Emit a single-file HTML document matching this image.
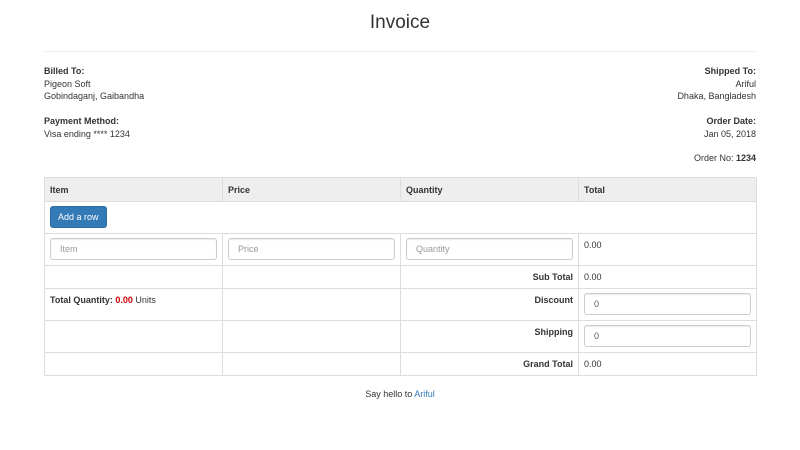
<!DOCTYPE html>
<html><head><style>
body{margin:0;background:#fff;font-family:"Liberation Sans",sans-serif;font-size:9px;color:#333;width:800px;height:450px;position:relative}
.a{position:absolute;line-height:12.5px}
h1{position:absolute;top:11px;left:0;width:800px;text-align:center;margin:0;font-weight:400;font-size:19px;line-height:24px}
hr{position:absolute;top:51px;left:44px;width:712px;margin:0;border:0;border-top:1px solid #eee}
table{position:absolute;left:44px;top:177px;width:713px;border-collapse:collapse;table-layout:fixed}
td,th{border:1px solid #ddd;padding:5px;vertical-align:top;text-align:left;line-height:12px}
th{background:#eee;font-weight:bold;padding-top:6px}
.r{text-align:right;font-weight:bold}
.in{border:1px solid #ccc;border-radius:3px;box-sizing:border-box;height:22px;padding:5px 9px;color:#999;line-height:11px;box-shadow:inset 0 1px 1px rgba(0,0,0,.075)}
.btn{display:inline-block;background:#337ab7;border:1px solid #2e6da4;color:#fff;border-radius:3px;padding:4px 7px;line-height:12px}
b{font-weight:bold}
</style></head><body>
<h1>Invoice</h1>
<hr>
<div class="a" style="left:44px;top:65px"><b>Billed To:</b><br>Pigeon Soft<br>Gobindaganj, Gaibandha</div>
<div class="a" style="right:44px;top:65px;text-align:right"><b>Shipped To:</b><br>Ariful<br>Dhaka, Bangladesh</div>
<div class="a" style="left:44px;top:115px"><b>Payment Method:</b><br>Visa ending **** 1234</div>
<div class="a" style="right:44px;top:115px;text-align:right"><b>Order Date:</b><br>Jan 05, 2018</div>
<div class="a" style="right:44px;top:152px">Order No: <b>1234</b></div>
<table>
<tr style="height:24px"><th>Item</th><th>Price</th><th>Quantity</th><th>Total</th></tr>
<tr style="height:31px"><td colspan="4" style="padding-top:4px"><span class="btn">Add a row</span></td></tr>
<tr style="height:31px"><td style="padding-top:4px"><div class="in">Item</div></td><td style="padding-top:4px"><div class="in">Price</div></td><td style="padding-top:4px"><div class="in">Quantity</div></td><td>0.00</td></tr>
<tr style="height:22px"><td></td><td></td><td class="r">Sub Total</td><td>0.00</td></tr>
<tr style="height:31px"><td><b>Total Quantity:</b> <b style="color:#c00">0.00</b> Units</td><td></td><td class="r">Discount</td><td style="padding-top:4px"><div class="in" style="color:#555">0</div></td></tr>
<tr style="height:31px"><td></td><td></td><td class="r">Shipping</td><td style="padding-top:4px"><div class="in" style="color:#555">0</div></td></tr>
<tr style="height:22px"><td></td><td></td><td class="r">Grand Total</td><td>0.00</td></tr>
</table>
<div class="a" style="left:0;width:800px;text-align:center;top:388px">Say hello to <span style="color:#337ab7">Ariful</span></div>
</body></html>
